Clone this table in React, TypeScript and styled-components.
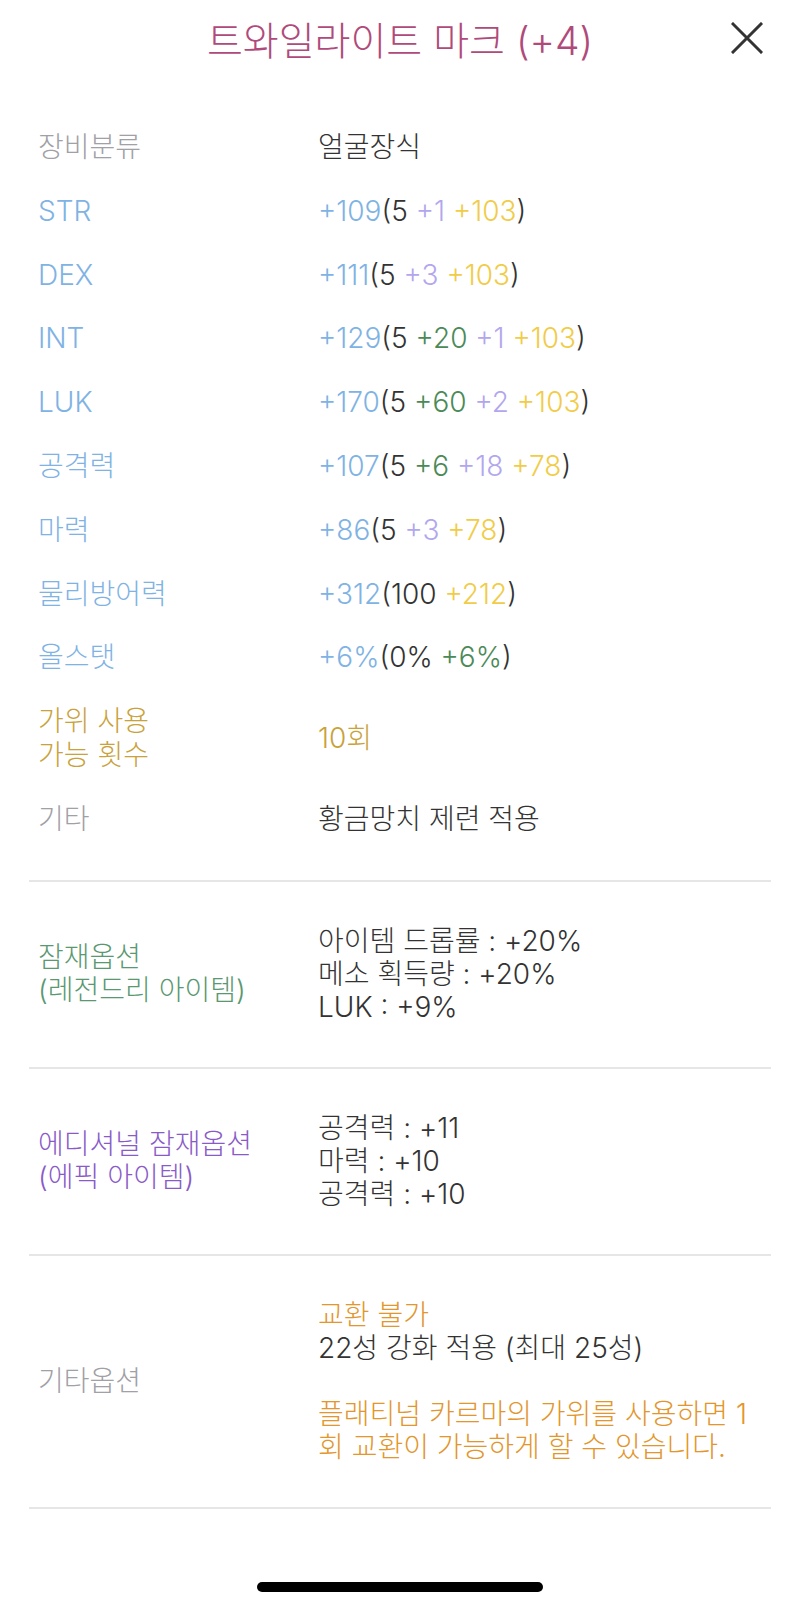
import React from 'react';
import styled, { createGlobalStyle } from 'styled-components';

const color = {
  title: '#b04a7b',
  label: '#a0a0a6',
  text: '#333333',
  blue: '#7fb3e4',
  lavender: '#b2a7ee',
  yellow: '#f1cc48',
  green: '#4b8a57',
  gold: '#c9a23b',
  potential: '#5a9872',
  additional: '#8a5bc8',
  orange: '#e2962c',
  line: '#e6e6e6',
};

const GlobalStyle = createGlobalStyle`
  body {
    margin: 0;
    background: #ffffff;
    font-family: Inter, 'Noto Sans CJK KR', sans-serif;
    -webkit-font-smoothing: antialiased;
  }
`;

const Page = styled.div`
  width: 800px;
  box-sizing: border-box;
  padding: 0 29px;
  font-size: 28px;
  font-weight: 300;
  color: ${color.text};
`;

const Header = styled.header`
  height: 76px;
  display: grid;
  grid-template-columns: 1fr auto 1fr;
  align-items: center;
`;

const Title = styled.h1`
  grid-column: 2;
  margin: 0;
  font-size: 39px;
  font-weight: 300;
  color: ${color.title};
  white-space: nowrap;
`;

const CloseButton = styled.button`
  grid-column: 3;
  justify-self: end;
  margin-right: 7px;
  width: 34px;
  height: 34px;
  padding: 0;
  border: none;
  background: none;
  display: flex;
  align-items: center;
  justify-content: center;
`;

const StatList = styled.div`
  padding-top: 40px;
  padding-bottom: 28px;
`;

const Row = styled.div`
  display: grid;
  grid-template-columns: 280px 1fr;
  align-items: center;
  padding: 15px 0 15px 9px;
  line-height: 33.8px;
`;

const Label = styled.div<{ $tone: string }>`
  color: ${(p) => p.$tone};
`;

const Value = styled.div<{ $tone?: string }>`
  color: ${(p) => p.$tone || color.text};
  white-space: nowrap;
`;

const Part = styled.span<{ $tone: string }>`
  color: ${(p) => p.$tone};
`;

const Divider = styled.hr`
  margin: 0;
  border: none;
  height: 2px;
  background: ${color.line};
`;

const Block = styled.section`
  display: grid;
  grid-template-columns: 280px 1fr;
  align-items: center;
  padding: 43px 0 43px 9px;
  line-height: 33px;
`;

const Lines = styled.div`
  white-space: nowrap;
`;

const Line = styled.div<{ $tone?: string }>`
  color: ${(p) => p.$tone || color.text};
  min-height: 33px;
`;

const HomeBar = styled.div`
  width: 286px;
  height: 10px;
  border-radius: 5px;
  background: #000;
  margin: 73px auto 0;
`;

type Piece = { text: string; tone: string };

const STATS: { label: string; total: string; parts: Piece[] }[] = [
  {
    label: 'STR',
    total: '+109',
    parts: [
      { text: '5', tone: color.text },
      { text: '+1', tone: color.lavender },
      { text: '+103', tone: color.yellow },
    ],
  },
  {
    label: 'DEX',
    total: '+111',
    parts: [
      { text: '5', tone: color.text },
      { text: '+3', tone: color.lavender },
      { text: '+103', tone: color.yellow },
    ],
  },
  {
    label: 'INT',
    total: '+129',
    parts: [
      { text: '5', tone: color.text },
      { text: '+20', tone: color.green },
      { text: '+1', tone: color.lavender },
      { text: '+103', tone: color.yellow },
    ],
  },
  {
    label: 'LUK',
    total: '+170',
    parts: [
      { text: '5', tone: color.text },
      { text: '+60', tone: color.green },
      { text: '+2', tone: color.lavender },
      { text: '+103', tone: color.yellow },
    ],
  },
  {
    label: '공격력',
    total: '+107',
    parts: [
      { text: '5', tone: color.text },
      { text: '+6', tone: color.green },
      { text: '+18', tone: color.lavender },
      { text: '+78', tone: color.yellow },
    ],
  },
  {
    label: '마력',
    total: '+86',
    parts: [
      { text: '5', tone: color.text },
      { text: '+3', tone: color.lavender },
      { text: '+78', tone: color.yellow },
    ],
  },
  {
    label: '물리방어력',
    total: '+312',
    parts: [
      { text: '100', tone: color.text },
      { text: '+212', tone: color.yellow },
    ],
  },
  {
    label: '올스탯',
    total: '+6%',
    parts: [
      { text: '0%', tone: color.text },
      { text: '+6%', tone: color.green },
    ],
  },
];

function CloseIcon() {
  return (
    <svg width='32' height='32' viewBox='0 0 32 32' fill='none'>
      <path
        d='M2 2L30 30M30 2L2 30'
        stroke='#333333'
        strokeWidth='3'
        strokeLinecap='square'
      />
    </svg>
  );
}

export default function App(): JSX.Element {
  return (
    <>
      <GlobalStyle />
      <Page>
        <Header>
          <Title>트와일라이트 마크 (+4)</Title>
          <CloseButton aria-label='닫기'>
            <CloseIcon />
          </CloseButton>
        </Header>

        <StatList>
          <Row>
            <Label $tone={color.label}>장비분류</Label>
            <Value>얼굴장식</Value>
          </Row>
          {STATS.map((stat) => (
            <Row key={stat.label}>
              <Label $tone={color.blue}>{stat.label}</Label>
              <Value>
                <Part $tone={color.blue}>{stat.total}</Part>(
                {stat.parts.map((part, i) => (
                  <React.Fragment key={i}>
                    {i > 0 && ' '}
                    <Part $tone={part.tone}>{part.text}</Part>
                  </React.Fragment>
                ))}
                )
              </Value>
            </Row>
          ))}
          <Row>
            <Label $tone={color.gold}>
              가위 사용
              <br />
              가능 횟수
            </Label>
            <Value $tone={color.gold}>10회</Value>
          </Row>
          <Row>
            <Label $tone={color.label}>기타</Label>
            <Value>황금망치 제련 적용</Value>
          </Row>
        </StatList>

        <Divider />
        <Block>
          <Label $tone={color.potential}>
            잠재옵션
            <br />
            (레전드리 아이템)
          </Label>
          <Lines>
            <Line>아이템 드롭률 : +20%</Line>
            <Line>메소 획득량 : +20%</Line>
            <Line>LUK : +9%</Line>
          </Lines>
        </Block>
        <Divider />
        <Block>
          <Label $tone={color.additional}>
            에디셔널 잠재옵션
            <br />
            (에픽 아이템)
          </Label>
          <Lines>
            <Line>공격력 : +11</Line>
            <Line>마력 : +10</Line>
            <Line>공격력 : +10</Line>
          </Lines>
        </Block>
        <Divider />
        <Block>
          <Label $tone={color.label}>기타옵션</Label>
          <Lines>
            <Line $tone={color.orange}>교환 불가</Line>
            <Line>22성 강화 적용 (최대 25성)</Line>
            <Line />
            <Line $tone={color.orange}>플래티넘 카르마의 가위를 사용하면 1</Line>
            <Line $tone={color.orange}>회 교환이 가능하게 할 수 있습니다.</Line>
          </Lines>
        </Block>
        <Divider />

        <HomeBar />
      </Page>
    </>
  );
}
